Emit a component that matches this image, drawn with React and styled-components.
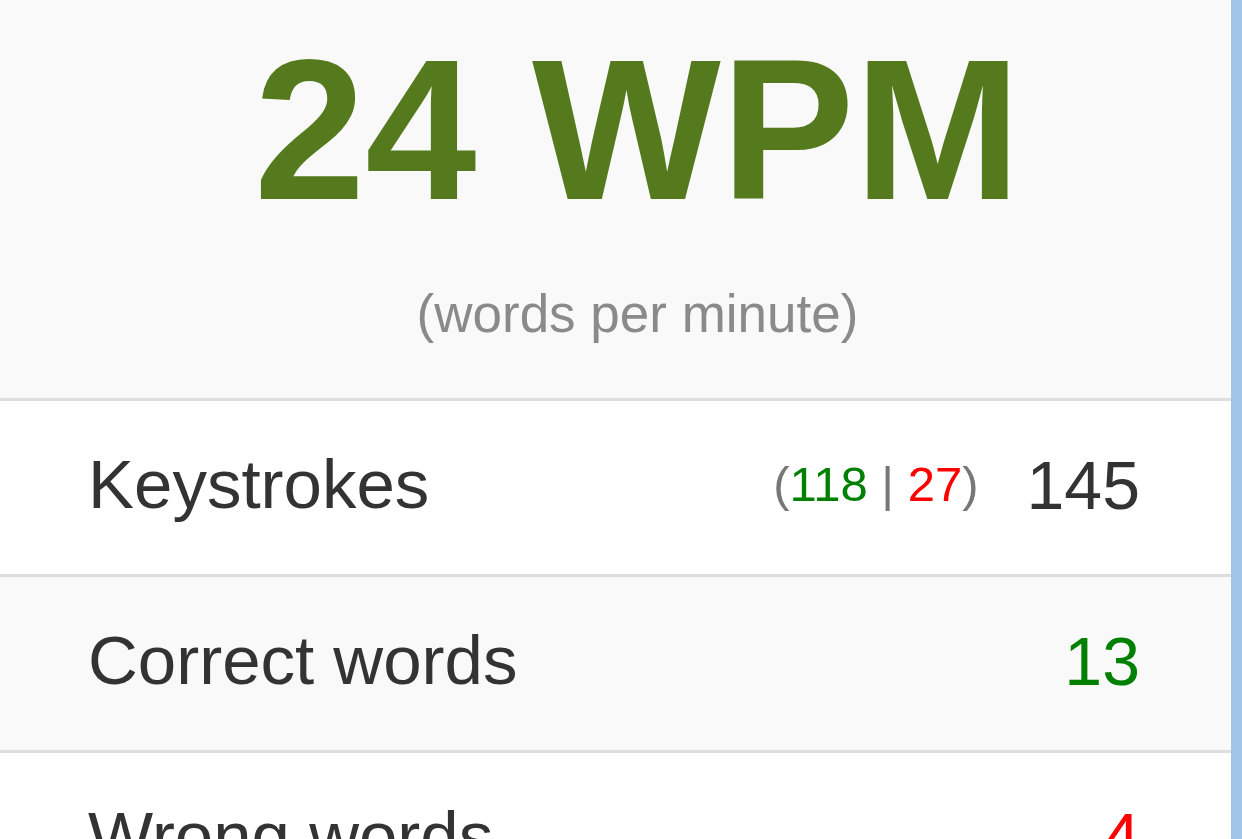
import React from 'react'
import styled, { createGlobalStyle } from 'styled-components'

const GlobalStyle = createGlobalStyle`
  html, body {
    margin: 0;
    padding: 0;
    background: #ffffff;
    overflow: hidden;
  }
  body {
    font-family: "Liberation Sans", Arial, sans-serif;
  }
`;

const Panel = styled.div`
  width: 1231px;
  height: 839px;
  border-right: 11px solid #a0c4e8;
  background: #ffffff;
  overflow: hidden;
`;

const Summary = styled.div`
  background: #f9f9f9;
  height: 398px;
  display: flex;
  flex-direction: column;
  align-items: center;
  padding-left: 44px;
  box-sizing: border-box;
`;

const Speed = styled.div`
  margin-top: 30px;
  font-size: 200px;
  line-height: 1;
  font-weight: 700;
  color: #557a1e;
  white-space: nowrap;
`;

const Unit = styled.div`
  margin-top: 57px;
  font-size: 53px;
  line-height: 1;
  color: #8a8a8a;
  white-space: nowrap;
`;

const Row = styled.div`
  height: 173px;
  border-top: 3px solid #dddddd;
  background: ${({ $shaded }) => ($shaded ? '#f9f9f9' : '#ffffff')};
  display: flex;
  align-items: center;
  padding: 0 91px 0 88px;
`;

const Label = styled.div`
  flex: 1;
  font-size: 69px;
  color: #333333;
  margin-top: -6px;
  white-space: nowrap;
`;

const Detail = styled.span`
  font-size: 49px;
  color: #777777;
  margin-right: 48px;
  margin-top: -8px;
  white-space: nowrap;
`;

const Tone = styled.span`
  color: ${({ $tone }) => $tone};
`;

const Value = styled.div`
  font-size: 68px;
  color: ${({ $tone }) => $tone || '#333333'};
  margin-top: -6px;
  white-space: nowrap;
`;

export default function App() {
  return (
    <>
      <GlobalStyle />
      <Panel>
        <Summary>
          <Speed>24 WPM</Speed>
          <Unit>(words per minute)</Unit>
        </Summary>
        <Row>
          <Label>Keystrokes</Label>
          <Detail>
            (<Tone $tone="#008000">118</Tone> | <Tone $tone="#ff0000">27</Tone>)
          </Detail>
          <Value>145</Value>
        </Row>
        <Row $shaded>
          <Label>Correct words</Label>
          <Value $tone="#008000">13</Value>
        </Row>
        <Row>
          <Label>Wrong words</Label>
          <Value $tone="#ff0000">4</Value>
        </Row>
      </Panel>
    </>
  )
}
